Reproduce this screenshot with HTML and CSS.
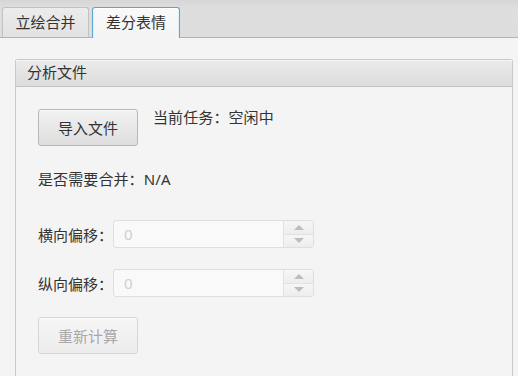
FILE: index.html
```html
<!DOCTYPE html>
<html>
<head>
  <meta charset="utf-8">
  <title>差分表情</title>
  <link rel="stylesheet" href="styles.css">
</head>
<body>
  <div class="tab-header">
    <div class="tab">立绘合并</div>
    <div class="tab active">差分表情</div>
  </div>

  <div class="tab-content">
    <div class="panel">
      <div class="panel-title">分析文件</div>
      <div class="panel-body">
        <div class="row-top">
          <button class="btn">导入文件</button>
          <span class="status">当前任务：空闲中</span>
        </div>

        <div class="merge-line">是否需要合并：N/A</div>

        <div class="field">
          <span class="field-label">横向偏移：</span>
          <div class="spinner">
            <input type="text" value="0" disabled>
            <div class="spin-buttons">
              <span class="spin-up"></span>
              <span class="spin-down"></span>
            </div>
          </div>
        </div>

        <div class="field">
          <span class="field-label">纵向偏移：</span>
          <div class="spinner">
            <input type="text" value="0" disabled>
            <div class="spin-buttons">
              <span class="spin-up"></span>
              <span class="spin-down"></span>
            </div>
          </div>
        </div>

        <button class="btn" disabled>重新计算</button>
      </div>
    </div>
  </div>
</body>
</html>
```

FILE: styles.css
```css
body {
  margin: 0;
  background: #f4f4f4;
  font-family: "Noto Sans", "Noto Sans CJK SC", sans-serif;
  font-size: 15px;
  color: #333;
  overflow: hidden;
}

.tab-header {
  height: 37px;
  display: flex;
  align-items: flex-end;
  gap: 3px;
  padding-left: 2px;
  background: linear-gradient(#d6d6d6, #dedede 20%, #dddddd);
  border-bottom: 1px solid #b3b3b3;
}

.tab {
  box-sizing: border-box;
  width: 87px;
  height: 30px;
  line-height: 28px;
  text-align: center;
  border: 1px solid #c2c2c2;
  border-bottom: none;
  border-radius: 3px 3px 0 0;
  background: linear-gradient(#ececec, #e2e2e2);
  color: #333;
}

.tab.active {
  width: 88px;
  height: 31px;
  margin-bottom: -1px;
  border-color: #57a7d4;
  background: linear-gradient(#f9f9f9, #f4f4f4);
  box-shadow: inset 0 1px 0 #fff, inset 1px 0 0 #dff0fa, inset -1px 0 0 #dff0fa;
}

.tab-content {
  padding: 21px 0 0 15px;
}

.panel {
  width: 498px;
  height: 320px;
  box-sizing: border-box;
  border: 1px solid #c9c9c9;
  border-bottom: none;
  border-radius: 3px 3px 0 0;
}

.panel-title {
  height: 26px;
  line-height: 25px;
  padding-left: 11px;
  background: linear-gradient(#ebebeb, #dcdcdc);
  border-bottom: 1px solid #c3c3c3;
  box-shadow: inset 0 1px 0 #f6f6f6;
}

.panel-body {
  padding: 22px 0 0 22px;
}

.row-top {
  display: flex;
  align-items: flex-start;
  gap: 15px;
}

.status {
  margin-top: -3px;
}

.btn {
  width: 100px;
  height: 37px;
  border: 1px solid #b7b7b7;
  border-radius: 3px;
  background: linear-gradient(#f2f2f2, #dedede);
  font-family: inherit;
  font-size: 15px;
  color: #333;
  box-shadow: inset 0 1px 0 #fafafa;
}

.btn:disabled {
  border-color: #d6d6d6;
  background: linear-gradient(#f6f6f6, #ececec);
  color: #a9a9a9;
}

.merge-line {
  margin-top: 22px;
  height: 20px;
}

.merge-line,
.status {
  letter-spacing: 0.1px;
}

.field {
  display: flex;
  align-items: center;
  margin-top: 32px;
}

.field + .field {
  margin-top: 21px;
}

.field-label {
  width: 75px;
}

.spinner {
  display: flex;
  width: 201px;
  height: 28px;
  box-sizing: border-box;
  border: 1px solid #dedede;
  border-radius: 3px;
  background: #f9f9f9;
  overflow: hidden;
}

.spinner input {
  flex: 1;
  min-width: 0;
  border: none;
  background: transparent;
  padding: 0 0 0 10px;
  font-family: inherit;
  font-size: 15px;
  color: #cfcfcf;
}

.spin-buttons {
  width: 29px;
  display: flex;
  flex-direction: column;
  border-left: 1px solid #e2e2e2;
}

.spin-up,
.spin-down {
  flex: 1;
  display: flex;
  align-items: center;
  justify-content: center;
  background: linear-gradient(#f6f6f6, #ededed);
}

.spin-up {
  border-bottom: 1px solid #e2e2e2;
}

.spin-up::after,
.spin-down::after {
  content: "";
  border-left: 5px solid transparent;
  border-right: 5px solid transparent;
}

.spin-up::after {
  border-bottom: 5px solid #bdbdbd;
}

.spin-down::after {
  border-top: 5px solid #bdbdbd;
}

.panel-body > .btn:last-child {
  margin-top: 20px;
}
```
